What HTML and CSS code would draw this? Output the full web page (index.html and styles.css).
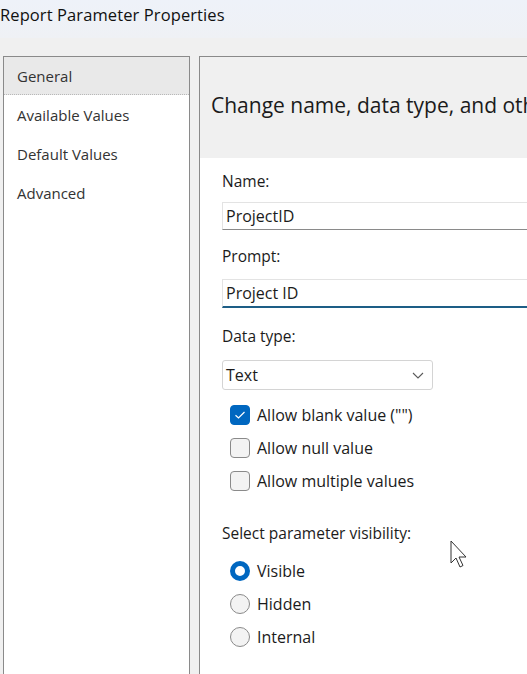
FILE: index.html
```html
<!DOCTYPE html>
<html lang="en">
<head>
    <meta charset="UTF-8">
    <title>Report Parameter Properties</title>
    <link rel="stylesheet" href="styles.css">
</head>
<body>
    <div class="titlebar">Report Parameter Properties</div>
    <div class="main">
        <div class="nav">
            <div class="nav-item active">General</div>
            <div class="nav-item">Available Values</div>
            <div class="nav-item">Default Values</div>
            <div class="nav-item">Advanced</div>
        </div>
        <div class="page">
            <div class="page-header">Change name, data type, and other options.</div>
            <div class="page-body">
                <div class="label lbl-name">Name:</div>
                <div class="textbox">ProjectID</div>
                <div class="label lbl-prompt">Prompt:</div>
                <div class="textbox focused">Project ID</div>
                <div class="label lbl-type">Data type:</div>
                <div class="combo">
                    <span>Text</span>
                    <svg class="chevron" width="12" height="7" viewBox="0 0 12 7"><path d="M1 1 L6 6 L11 1" fill="none" stroke="#5a5a5a" stroke-width="1.1"/></svg>
                </div>
                <div class="checks">
                    <div class="opt"><span class="box checked"><svg width="12" height="10" viewBox="0 0 12 10"><path d="M1.5 5.2 L4.5 8 L10.5 2" fill="none" stroke="#fff" stroke-width="1.2"/></svg></span>Allow blank value ("")</div>
                    <div class="opt"><span class="box"></span>Allow null value</div>
                    <div class="opt"><span class="box"></span>Allow multiple values</div>
                </div>
                <div class="label lbl-vis">Select parameter visibility:</div>
                <div class="radios">
                    <div class="opt"><span class="radio on"></span>Visible</div>
                    <div class="opt"><span class="radio"></span>Hidden</div>
                    <div class="opt"><span class="radio"></span>Internal</div>
                </div>
            </div>
        </div>
    </div>
    <svg class="cursor" width="20" height="30" viewBox="0 0 20 30"><path d="M1 1 L1 23 L6 18 L10 27 L13 25.5 L9 17 L16 17 Z" fill="#fff" stroke="#333" stroke-width="1"/></svg>
</body>
</html>
```

FILE: styles.css
```css
html, body {
    margin: 0;
    height: 100%;
    overflow: hidden;
}
body {
    font-family: 'Open Sans', 'Noto Sans', sans-serif;
    color: #1b1b1b;
    background: #f0f0f0;
    position: relative;
}
.titlebar {
    height: 38px;
    line-height: 30px;
    font-size: 16.5px;
    background: linear-gradient(#eef2f9, #eff1f5);
    color: #111;
    letter-spacing: 0.1px;
}
.main {
    display: flex;
    padding-top: 18px;
    padding-left: 3px;
    gap: 9px;
    height: 700px;
}
.nav {
    flex: none;
    width: 185px;
    background: #fff;
    border: 1px solid #8a8a8a;
    border-bottom: none;
}
.nav-item {
    height: 39px;
    line-height: 39px;
    padding-left: 13px;
    font-size: 15px;
    color: #333;
}
.nav-item.active {
    height: 37px;
    line-height: 38px;
    background: #e9e9e9;
    border-bottom: 1px dotted #b8b8b8;
    margin-bottom: 1px;
}
.page {
    flex: none;
    width: 420px;
    background: #fff;
    border: 1px solid #8a8a8a;
    border-bottom: none;
    border-right: none;
}
.page-header {
    height: 101px;
    line-height: 96px;
    background: #f0f0f0;
    padding-left: 11px;
    font-size: 21px;
    white-space: nowrap;
    overflow: hidden;
}
.page-body {
    padding: 13px 0 0 22px;
}
.label {
    font-size: 15.5px;
    line-height: 20px;
    height: 20px;
}
.textbox {
    height: 26px;
    line-height: 26px;
    margin-top: 11px;
    padding-left: 3px;
    font-size: 16px;
    border: 1px solid #e3e3e3;
    border-bottom-color: #8a8a8a;
    border-right: none;
    white-space: nowrap;
}
.textbox.focused {
    height: 26px;
    margin-top: 13px;
    border-bottom: 2px solid #1d5e86;
}
.lbl-prompt {
    margin-top: 16px;
}
.lbl-type {
    margin-top: 18px;
}
.combo {
    box-sizing: border-box;
    width: 211px;
    height: 30px;
    margin-top: 14px;
    border: 1px solid #d4d4d4;
    border-radius: 3px;
    display: flex;
    align-items: center;
    justify-content: space-between;
    padding: 0 8px 0 3px;
    font-size: 16px;
}
.checks {
    margin-top: 8px;
}
.opt {
    height: 33px;
    display: flex;
    align-items: center;
    padding-left: 8px;
    font-size: 16px;
}
.box {
    width: 18px;
    height: 18px;
    border: 1px solid #8a8a8a;
    border-radius: 4px;
    background: #f3f3f3;
    margin-right: 7px;
    display: flex;
    align-items: center;
    justify-content: center;
}
.box.checked {
    background: #0067c0;
    border-color: #0067c0;
}
.lbl-vis {
    margin-top: 26px;
}
.radios {
    margin-top: 11px;
}
.radio {
    box-sizing: border-box;
    width: 20px;
    height: 20px;
    border: 1px solid #8a8a8a;
    border-radius: 50%;
    background: #f3f3f3;
    margin-right: 7px;
}
.radio.on {
    border: 5px solid #0067c0;
    background: #fff;
}
.cursor {
    position: absolute;
    left: 450px;
    top: 540px;
}
```
